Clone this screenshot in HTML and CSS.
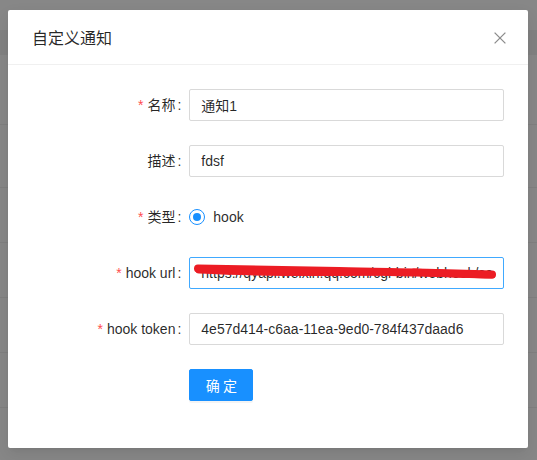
FILE: index.html
```html
<!DOCTYPE html>
<html lang="zh-CN">
<head>
<meta charset="utf-8">
<title>自定义通知</title>
<link rel="stylesheet" href="styles.css">
</head>
<body>
<div class="page">
  <div class="thead"></div>
  <div class="trow r1"></div>
  <div class="trow r2"></div>
  <div class="trow r3"></div>
  <div class="trow r3"></div>
  <div class="trow r3"></div>
  <div class="trow r3"></div>
</div>

<div class="modal">
  <div class="modal-header">
    <div class="modal-title">自定义通知</div>
    <button class="modal-close" aria-label="Close">
      <svg width="12" height="12" viewBox="0 0 12 12"><path d="M0.6 0.6 L11.4 11.4 M11.4 0.6 L0.6 11.4" stroke="#8c8c8c" stroke-width="1.3" fill="none"/></svg>
    </button>
  </div>
  <div class="modal-body">
    <div class="form-item">
      <div class="label"><span class="req">*</span>名称<span class="colon">:</span></div>
      <div class="control"><input class="input" value="通知1"></div>
    </div>
    <div class="form-item">
      <div class="label">描述<span class="colon">:</span></div>
      <div class="control"><input class="input" value="fdsf"></div>
    </div>
    <div class="form-item">
      <div class="label"><span class="req">*</span>类型<span class="colon">:</span></div>
      <div class="control radio-wrap">
        <span class="radio"><span class="dot"></span></span>
        <span class="radio-label">hook</span>
      </div>
    </div>
    <div class="form-item">
      <div class="label"><span class="req">*</span>hook url<span class="colon">:</span></div>
      <div class="control redacted">
        <input class="input focused" value="https://qyapi.weixin.qq.com/cgi-bin/webhook/send?key=">
        <svg class="scribble" width="315" height="32" viewBox="0 0 315 32">
          <path d="M9 11.5 C 60 12, 110 13, 150 14 S 230 15, 250 16 L 303 17.5" stroke="#ec1c24" stroke-width="8" stroke-linecap="round" fill="none"/>
          <path d="M10 13 C 70 16, 130 16, 190 15" stroke="#ec1c24" stroke-width="7" stroke-linecap="round" fill="none"/>
          <path d="M225 15 C 260 17, 285 18, 303 18" stroke="#ec1c24" stroke-width="7" stroke-linecap="round" fill="none"/>
        </svg>
      </div>
    </div>
    <div class="form-item">
      <div class="label"><span class="req">*</span>hook token<span class="colon">:</span></div>
      <div class="control"><input class="input" value="4e57d414-c6aa-11ea-9ed0-784f437daad6"></div>
    </div>
    <div class="form-item">
      <div class="label"></div>
      <div class="control"><button class="btn-primary">确 定</button></div>
    </div>
  </div>
</div>
</body>
</html>
```

FILE: styles.css
```css
* { box-sizing: border-box; }
html, body { margin: 0; padding: 0; }
body {
  width: 537px;
  height: 460px;
  overflow: hidden;
  background: #878787;
  font-family: "Liberation Sans", "Noto Sans CJK SC", sans-serif;
  font-size: 14px;
  color: rgba(0,0,0,0.85);
  position: relative;
}
.page { padding-top: 30px; }
.thead { height: 25px; background: #818181; }
.trow { border-bottom: 1px solid #7f7f7f; }
.r1 { height: 70px; }
.r2 { height: 63px; }
.r3 { height: 55px; }

.modal {
  position: absolute;
  left: 8px;
  top: 10px;
  width: 520px;
  background: #fff;
  border-radius: 2px;
  box-shadow: 0 3px 6px -4px rgba(0,0,0,.12), 0 6px 16px 0 rgba(0,0,0,.08);
}
.modal-header {
  position: relative;
  padding: 16px 24px;
  border-bottom: 1px solid #f0f0f0;
}
.modal-title {
  font-family: "Noto Sans CJK SC", sans-serif;
  font-size: 16px;
  line-height: 22px;
  color: rgba(0,0,0,0.85);
}
.modal-close {
  position: absolute;
  top: 0;
  right: 0;
  width: 56px;
  height: 55px;
  border: 0;
  padding: 0;
  background: transparent;
  display: flex;
  align-items: center;
  justify-content: center;
}
.modal-body { padding: 24px 24px 23px; }
.form-item {
  display: flex;
  margin-bottom: 24px;
  height: 32px;
}
.label {
  width: 33.3333%;
  flex: none;
  text-align: right;
  line-height: 32px;
  white-space: nowrap;
  font-family: "Liberation Sans", "Noto Sans CJK SC", sans-serif;
}
.req {
  color: #ff4d4f;
  margin-right: 4px;
  font-family: "Liberation Sans", sans-serif;
  font-size: 14px;
}
.colon { margin: 0 8px 0 2px; }
.control { flex: 1; position: relative; }
.input {
  width: 100%;
  height: 32px;
  padding: 4px 11px;
  border: 1px solid #d9d9d9;
  border-radius: 2px;
  font-family: "Liberation Sans", "Noto Sans CJK SC", sans-serif;
  font-size: 14px;
  color: rgba(0,0,0,0.85);
  background: #fff;
  outline: none;
  display: block;
}
.input.focused { border-color: #40a9ff; }
.radio-wrap { display: flex; align-items: center; }
.radio {
  width: 16px;
  height: 16px;
  border: 1px solid #1890ff;
  border-radius: 50%;
  display: flex;
  align-items: center;
  justify-content: center;
}
.dot { width: 8px; height: 8px; border-radius: 50%; background: #1890ff; }
.radio-label { padding: 0 8px; }
.scribble { position: absolute; left: 0; top: 0; pointer-events: none; }
.btn-primary {
  width: 64px;
  height: 32px;
  border: 1px solid #1890ff;
  background: #1890ff;
  color: #fff;
  border-radius: 2px;
  font-family: "Noto Sans CJK SC", sans-serif;
  font-size: 14px;
  padding: 0;
  box-shadow: 0 2px 0 rgba(0,0,0,.045);
}
```
